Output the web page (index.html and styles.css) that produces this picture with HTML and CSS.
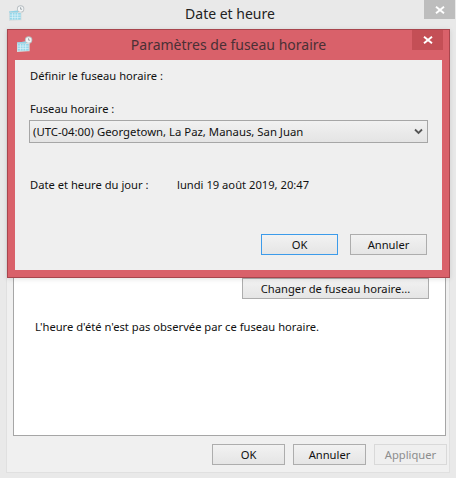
FILE: index.html
```html
<!DOCTYPE html>
<html lang="fr">
<head>
<meta charset="utf-8">
<title>Date et heure</title>
<link rel="stylesheet" href="styles.css">
</head>
<body>
<svg class="defs" width="0" height="0" aria-hidden="true">
  <symbol id="cal" viewBox="0 0 16 16">
    <circle cx="11.6" cy="4" r="3.7" fill="#b9bfc3"/>
    <circle cx="11.6" cy="4" r="2.8" fill="#f3f5f6"/>
    <path d="M11.6 2.2v2h1.5" stroke="#808a90" stroke-width=".7" fill="none"/>
    <path d="M0 6.6 9 5.4V7h3.6v8.2H11L0 16z" fill="#d8dfe0"/>
    <path d="M0 6.6 9 5.4V7.4H0z" fill="#8ed2e6"/>
    <path d="M.8 8h10.9v6.6H.8z" fill="#93d7ea"/>
    <path d="M.8 10.1h10.9M.8 12.4h10.9M3.4 8v6.6M6 8v6.6M8.7 8v6.6" stroke="#e2f4f9" stroke-width=".7" fill="none"/>
  </symbol>
  <symbol id="x" viewBox="0 0 10 8">
    <path d="M1 .7 9 7.3M9 .7 1 7.3" stroke="#fff" stroke-width="1.9" fill="none"/>
  </symbol>
</svg>
<div class="window">
  <header class="titlebar">
    <svg class="icon"><use href="#cal"/></svg>
    <h1 class="title">Date et heure</h1>
    <div class="close close-grey"><svg class="x"><use href="#x"/></svg></div>
  </header>
  <main class="content">
    <section class="panel">
      <button class="btn btn-tz">Changer de fuseau horaire...</button>
      <p class="dst">L'heure d'été n'est pas observée par ce fuseau horaire.</p>
    </section>
  </main>
  <footer class="footer">
    <button class="btn btn-foot">OK</button>
    <button class="btn btn-foot">Annuler</button>
    <button class="btn btn-foot btn-disabled">Appliquer</button>
  </footer>
</div>

<div class="modal">
  <header class="modal-bar">
    <svg class="icon"><use href="#cal"/></svg>
    <h2 class="title title-modal">Paramètres de fuseau horaire</h2>
    <div class="close close-red"><svg class="x"><use href="#x"/></svg></div>
  </header>
  <div class="modal-body">
    <p class="label label-first">Définir le fuseau horaire :</p>
    <p class="label label-tz">Fuseau horaire :</p>
    <div class="select">
      <span>(UTC-04:00) Georgetown, La Paz, Manaus, San Juan</span>
      <svg class="chev" width="9" height="7" viewBox="0 0 9 7"><path d="M1 1.5 4.5 5 8 1.5" fill="none" stroke="#555" stroke-width="1.8"/></svg>
    </div>
    <div class="now">
      <span class="now-label">Date et heure du jour :</span>
      <span>lundi 19 août 2019, 20:47</span>
    </div>
    <div class="modal-actions">
      <button class="btn btn-modal btn-default">OK</button>
      <button class="btn btn-modal">Annuler</button>
    </div>
  </div>
</div>
</body>
</html>
```

FILE: styles.css
```css
* { box-sizing: border-box; }
html, body { margin: 0; padding: 0; }
body {
  width: 456px;
  height: 478px;
  overflow: hidden;
  position: relative;
  font-family: "Noto Sans", "Open Sans", sans-serif;
  font-size: 11.2px;
  color: #111;
  background: #e9e9e9;
}
.defs { position: absolute; }
p, h1, h2 { margin: 0; font-weight: 400; }

.window {
  height: 478px;
  display: flex;
  flex-direction: column;
}
.titlebar {
  height: 29px;
  flex: none;
  display: grid;
  grid-template-columns: 1fr auto 1fr;
  align-items: start;
  background: #e9e9e9;
}
.icon { width: 16px; height: 16px; margin: 5px 0 0 9px; }
.title {
  font-size: 14px;
  line-height: 20px;
  padding-top: 4px;
  padding-left: 4px;
  color: #222;
}
.close {
  width: 31px;
  height: 19px;
  display: flex;
  align-items: center;
  justify-content: center;
  justify-self: end;
}
.x { width: 10px; height: 8px; }
.close-grey { background: #bdbdbd; margin-right: 1px; }

.content {
  flex: 1;
  min-height: 0;
  display: flex;
  margin: 0 6px;
  padding: 0 3px 0 6px;
  background: #f0f0f0;
  border-left: 1px solid #e0e0e0;
  border-right: 1px solid #e0e0e0;
}
.panel {
  flex: 1;
  background: #fff;
  border: 1px solid #a6a6a6;
  padding: 248px 16px 0 21px;
  display: flex;
  flex-direction: column;
}
.btn {
  font: inherit;
  color: #111;
  padding: 0;
  height: 21px;
  border: 1px solid #adadad;
  background: linear-gradient(#f2f2f2, #e5e5e5);
}
.btn-tz { width: 187px; align-self: flex-end; }
.dst { margin-top: 20px; line-height: 16px; }

.footer {
  height: 37px;
  flex: none;
  margin: 0 6px 5px;
  padding: 8px 2px 0 0;
  display: flex;
  justify-content: flex-end;
  gap: 8px;
  background: #f0f0f0;
  border: 1px solid #e0e0e0;
  border-top: 0;
}
.btn-foot { width: 73px; }
.btn-disabled { color: #8d8d8d; border-color: #d9d9d9; background: #efefef; }

.modal {
  position: absolute;
  left: 7px;
  top: 29px;
  width: 443px;
  height: 249px;
  background: #d9616a;
  border: 1px solid #a8454d;
  box-shadow: 0 1px 5px rgba(0, 0, 0, .12);
  display: flex;
  flex-direction: column;
  padding: 0 7px 7px;
}
.modal-bar {
  height: 30px;
  flex: none;
  display: grid;
  grid-template-columns: 1fr auto 1fr;
  align-items: start;
  margin: 0 -7px;
}
.modal-bar .icon { margin: 6px 0 0 9px; }
.title-modal { color: #4a3035; padding: 5px 0 0; }
.close-red { background: #c44f56; margin-right: 6px; height: 20px; }

.modal-body {
  flex: 1;
  background: #efefef;
  padding: 8px 14px 0 15px;
  display: flex;
  flex-direction: column;
}
.label { line-height: 16px; }
.label-tz { margin-top: 17px; }
.select {
  height: 23px;
  margin: 3px 0 0 -1px;
  border: 1px solid #a6a6a6;
  background: linear-gradient(#f1f1f1, #e4e4e4);
  display: flex;
  align-items: center;
  justify-content: space-between;
  padding: 0 4px 0 3px;
  font-size: 11.35px;
}
.now { margin-top: 34px; display: flex; line-height: 16px; }
.now-label { width: 147px; }
.modal-actions {
  margin: 41px 1px 0 0;
  display: flex;
  justify-content: flex-end;
  gap: 12px;
}
.btn-modal { width: 77px; }
.btn-default { border-color: #3c9bea; }
```
